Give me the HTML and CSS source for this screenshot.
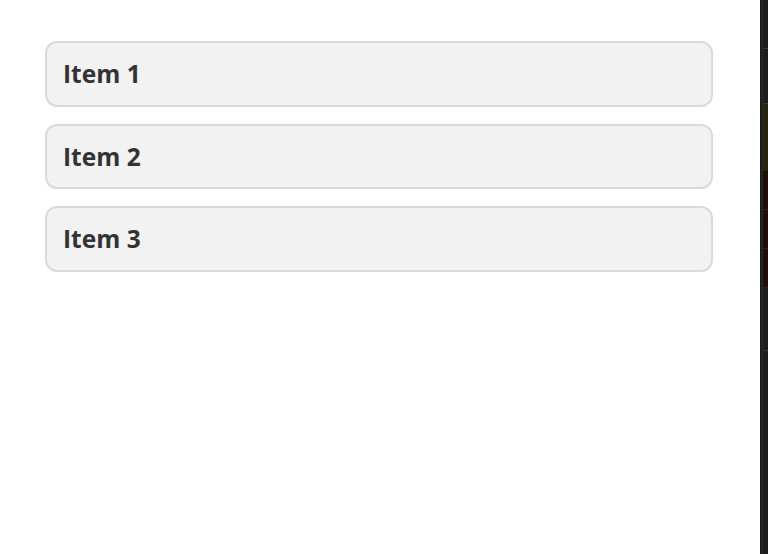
FILE: index.html
```html
<!DOCTYPE html>
<html lang="en">
<head>
<meta charset="utf-8">
<title>Items</title>
<link rel="stylesheet" href="styles.css">
</head>
<body>
<div class="layout">
  <main class="content">
    <ul class="list">
      <li class="item">Item 1</li>
      <li class="item">Item 2</li>
      <li class="item">Item 3</li>
    </ul>
  </main>
  <aside class="strip">
    <div class="strip-inner">
      <div class="seg seg-top"></div>
      <div class="seg seg-olive"></div>
      <div class="seg seg-red"></div>
      <div class="seg seg-red"></div>
      <div class="seg seg-red seg-last"></div>
      <div class="seg seg-gray"></div>
    </div>
  </aside>
</div>
</body>
</html>
```

FILE: styles.css
```css
html, body {
  margin: 0;
  padding: 0;
  background: #ffffff;
  height: 100%;
}

.layout {
  display: flex;
  height: 554px;
}

.content {
  flex: 1;
  padding: 41px 47px 0 45px;
  background: #ffffff;
}

.list {
  list-style: none;
  margin: 0;
  padding: 0;
  display: flex;
  flex-direction: column;
  gap: 17px;
}

.item {
  box-sizing: border-box;
  height: 65.5px;
  display: flex;
  align-items: center;
  padding: 0 16px 0 16px;
  background: #f2f2f2;
  border: 2px solid #dadada;
  border-radius: 12px;
  font-family: "Open Sans", Inter, "Liberation Sans", sans-serif;
  font-weight: 700;
  font-size: 24.5px;
  color: #333333;
}

.strip {
  width: 8px;
  background: #1c1c1c;
  display: flex;
}

.strip-inner {
  flex: 1;
  margin-left: 2px;
  border-left: 1px solid #2a2a2a;
  display: flex;
  flex-direction: column;
}

.seg-top {
  height: 48px;
  border-bottom: 1px solid #3a3a3a;
}

.seg-olive {
  margin-top: 54px;
  height: 67px;
  background: #26240f;
  border-top: 1px solid #3a3820;
}

.seg-red {
  height: 38px;
  background: #1d0e06;
  border-bottom: 1px solid #3a1c0c;
}

.seg-gray {
  margin-top: 62px;
  border-top: 1px solid #3a3a3a;
}
```
